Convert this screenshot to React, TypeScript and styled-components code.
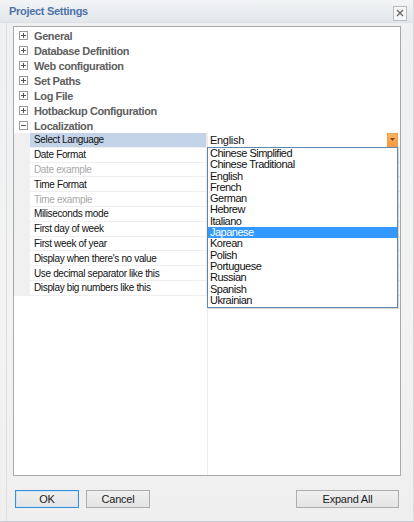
import React from 'react';
import styled, { createGlobalStyle } from 'styled-components';

const GlobalStyle = createGlobalStyle`
  html, body {
    margin: 0;
    padding: 0;
    background: #ececec;
  }
  body {
    font-family: "Liberation Sans", Arial, sans-serif;
    font-size: 11px;
  }
`;

const Dialog = styled.div`
  width: 414px;
  height: 522px;
  box-sizing: border-box;
  display: flex;
  flex-direction: column;
  background: linear-gradient(180deg, #eef0f2 0%, #f3f3f3 60%, #efefef 100%);
  border-right: 1px solid #d8dadd;
  border-bottom: 1px solid #c9cbce;
`;

const TitleBar = styled.div`
  height: 22px;
  flex-shrink: 0;
  display: flex;
  align-items: center;
  justify-content: space-between;
  padding: 0 6px 0 9px;
  background: linear-gradient(180deg, #f2f4f6 0%, #e3e7eb 100%);
  border-bottom: 1px solid #dde1e5;
`;

const Title = styled.span`
  font-family: "Liberation Sans", Arial, sans-serif;
  font-weight: bold;
  font-size: 11px;
  letter-spacing: -0.3px;
  color: #4c73a8;
`;

const CloseButton = styled.div`
  width: 12px;
  height: 13px;
  border: 1px solid #b9bcc0;
  background: #f7f7f7;
  display: flex;
  align-items: center;
  justify-content: center;
  margin-top: 4px;
`;

const Body = styled.div`
  flex: 1;
  display: flex;
  flex-direction: column;
  padding: 3px 12px 0 6px;
  border-left: 1px solid #dcdee0;
  margin-left: 6px;
`;

const Panel = styled.div`
  position: relative;
  height: 450px;
  background: #fff;
  border: 1px solid #a9a9a9;
  padding-top: 1px;
  box-sizing: border-box;
`;

const ValueDivider = styled.div`
  position: absolute;
  left: 193px;
  top: 105px;
  bottom: 0;
  border-left: 1px solid #ededed;
`;

const CategoryRow = styled.div`
  height: 15px;
  display: flex;
  align-items: center;
  padding-left: 5px;
  gap: 6px;
  font-family: "Liberation Sans", Arial, sans-serif;
  font-weight: bold;
  font-size: 11px;
  letter-spacing: -0.4px;
  color: #606060;
`;

const Toggle = styled.span<{ $open?: boolean }>`
  width: 7px;
  height: 7px;
  border: 1px solid #9a9a9a;
  position: relative;
  flex-shrink: 0;
  &::before {
    content: '';
    position: absolute;
    left: 1px;
    right: 1px;
    top: 3px;
    height: 1px;
    background: #555;
  }
  &::after {
    content: '';
    display: ${p => (p.$open ? 'none' : 'block')};
    position: absolute;
    top: 1px;
    bottom: 1px;
    left: 3px;
    width: 1px;
    background: #555;
  }
`;

const PropRow = styled.div`
  height: 14.8px;
  display: flex;
  box-sizing: border-box;
`;

const Gutter = styled.div`
  width: 16px;
  flex-shrink: 0;
  background: #f0f0f0;
`;

const PropName = styled.div<{ $selected?: boolean; $muted?: boolean }>`
  width: 177px;
  flex-shrink: 0;
  box-sizing: border-box;
  padding-left: 4px;
  display: flex;
  align-items: center;
  white-space: nowrap;
  font-size: 10px;
  letter-spacing: -0.35px;
  color: ${p => (p.$muted ? '#a9a9a9' : '#111')};
  background: ${p => (p.$selected ? '#c3d3e8' : '#fff')};
  border-bottom: 1px solid #efefef;
  border-right: 1px solid #ededed;
`;

const PropValue = styled.div`
  flex: 1;
  border-bottom: 1px solid #efefef;
  display: flex;
  align-items: center;
  padding-left: 3px;
  font-size: 11px;
  letter-spacing: -0.3px;
  color: #111;
`;

const ComboArrow = styled.div`
  margin-left: auto;
  margin-right: 2px;
  width: 11px;
  height: 14px;
  background: linear-gradient(180deg, #fbb45f 0%, #f59a3a 100%);
  border: 1px solid #f0a050;
  box-sizing: border-box;
  display: flex;
  align-items: center;
  justify-content: center;
`;

const DropList = styled.div`
  position: absolute;
  left: 193px;
  top: 120px;
  width: 191px;
  background: #fff;
  border: 1px solid #5f86ad;
  box-sizing: border-box;
  box-shadow: 1px 1px 1px rgba(0,0,0,0.15);
  padding: 0 0 1px 0;
`;

const DropItem = styled.div<{ $active?: boolean }>`
  height: 11.3px;
  line-height: 11.3px;
  padding-left: 2px;
  font-size: 11px;
  letter-spacing: -0.5px;
  color: ${p => (p.$active ? '#fff' : '#111')};
  background: ${p => (p.$active ? '#3399ff' : 'transparent')};
  white-space: nowrap;
`;

const Footer = styled.div`
  display: flex;
  align-items: center;
  gap: 7px;
  padding: 14px 2px 0 2px;
`;

const Button = styled.button<{ $focused?: boolean; $w: number }>`
  width: ${p => p.$w}px;
  height: 18px;
  box-sizing: border-box;
  font-family: "Liberation Sans", Arial, sans-serif;
  font-size: 11px;
  letter-spacing: -0.2px;
  color: #222;
  background: linear-gradient(180deg, #f0f0f0 0%, #e4e4e4 100%);
  border: 1px solid ${p => (p.$focused ? '#3c8fd4' : '#adadad')};
  box-shadow: ${p => (p.$focused ? 'inset 0 0 0 1px #cde4f7' : 'none')};
  padding: 0;
`;

const Spacer = styled.div`
  flex: 1;
`;

const categories = [
  'General',
  'Database Definition',
  'Web configuration',
  'Set Paths',
  'Log File',
  'Hotbackup Configuration',
];

const props: { name: string; muted?: boolean }[] = [
  { name: 'Select Language' },
  { name: 'Date Format' },
  { name: 'Date example', muted: true },
  { name: 'Time Format' },
  { name: 'Time example', muted: true },
  { name: 'Miliseconds mode' },
  { name: 'First day of week' },
  { name: 'First week of year' },
  { name: "Display when there's no value" },
  { name: 'Use decimal separator like this' },
  { name: 'Display big numbers like this' },
];

const languages = [
  'Chinese Simplified',
  'Chinese Traditional',
  'English',
  'French',
  'German',
  'Hebrew',
  'Italiano',
  'Japanese',
  'Korean',
  'Polish',
  'Portuguese',
  'Russian',
  'Spanish',
  'Ukrainian',
];

const App: React.FC = () => {
  return (
    <>
      <GlobalStyle />
      <Dialog>
        <TitleBar>
          <Title>Project Settings</Title>
          <CloseButton>
            <svg width="8" height="8" viewBox="0 0 8 8">
              <path d="M1 1 L7 7 M7 1 L1 7" stroke="#6a6a6a" strokeWidth="1.4" />
            </svg>
          </CloseButton>
        </TitleBar>
        <Body>
          <Panel>
            {categories.map(c => (
              <CategoryRow key={c}>
                <Toggle />
                {c}
              </CategoryRow>
            ))}
            <CategoryRow>
              <Toggle $open />
              Localization
            </CategoryRow>
            {props.map((p, i) => (
              <PropRow key={p.name}>
                <Gutter />
                <PropName $selected={i === 0} $muted={p.muted}>
                  {p.name}
                </PropName>
                <PropValue>
                  {i === 0 && (
                    <>
                      English
                      <ComboArrow>
                        <svg width="5" height="3" viewBox="0 0 5 3">
                          <path d="M0 0 H5 L2.5 3 Z" fill="#7a4a1a" />
                        </svg>
                      </ComboArrow>
                    </>
                  )}
                </PropValue>
              </PropRow>
            ))}
            <ValueDivider />
            <DropList>
              {languages.map(l => (
                <DropItem key={l} $active={l === 'Japanese'}>
                  {l}
                </DropItem>
              ))}
            </DropList>
          </Panel>
          <Footer>
            <Button $focused $w={64}>OK</Button>
            <Button $w={64}>Cancel</Button>
            <Spacer />
            <Button $w={103}>Expand All</Button>
          </Footer>
        </Body>
      </Dialog>
    </>
  );
};

export default App;
